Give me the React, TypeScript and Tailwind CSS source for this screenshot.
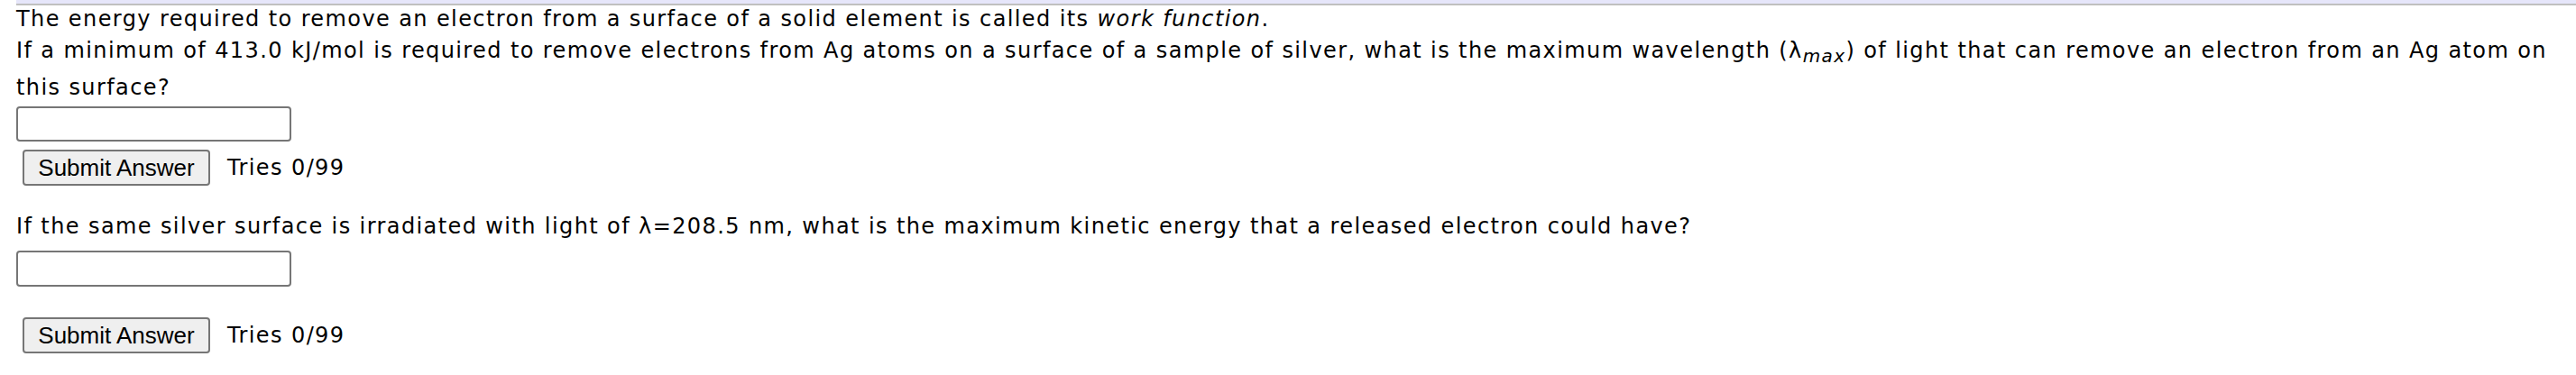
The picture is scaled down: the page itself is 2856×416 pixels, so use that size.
export default function App() {
  return (
    <div className="min-h-[416px] w-[2856px] bg-white pl-[18px] text-black">
      <div className="h-[4px] bg-[#e6e6fa]" />
      <div className="h-[2px] bg-[#c0c0c0]" />

      <div className="font-['DejaVu_Sans',sans-serif] text-[24px] tracking-[1.4px]">
        <div className="pt-[1px] leading-[29px]">
          The energy required to remove an electron from a surface of a solid element is called its <i>work function</i>.
        </div>
        <div className="leading-[41px]">
          If a minimum of 413.0 kJ/mol is required to remove electrons from Ag atoms on a surface of a sample of silver, what
          is the maximum wavelength (λ
          <sub className="text-[20px] italic leading-none">max</sub>) of light that can remove an electron from an Ag atom on
          this surface?
        </div>
        <input type="text" className="block h-[39px] w-[305px] rounded-[4px] border-2 border-[#767676] bg-white" />
        <div className="mt-[9px] ml-[7px] flex items-center">
          <button className="h-[40px] w-[208px] rounded-[4px] border-2 border-[#767676] bg-[#efefef] font-['Liberation_Sans',Arial,sans-serif] text-[26px] leading-none tracking-normal">
            Submit Answer
          </button>
          <span className="ml-[19px]">Tries 0/99</span>
        </div>

        <div className="mt-[31px] leading-[29px]">
          If the same silver surface is irradiated with light of λ=208.5 nm, what is the maximum kinetic energy that a
          released electron could have?
        </div>
        <input type="text" className="mt-[12px] block h-[40px] w-[305px] rounded-[4px] border-2 border-[#767676] bg-white" />
        <div className="mt-[34px] ml-[7px] flex items-center">
          <button className="h-[40px] w-[208px] rounded-[4px] border-2 border-[#767676] bg-[#efefef] font-['Liberation_Sans',Arial,sans-serif] text-[26px] leading-none tracking-normal">
            Submit Answer
          </button>
          <span className="ml-[19px]">Tries 0/99</span>
        </div>
      </div>
    </div>
  )
}
